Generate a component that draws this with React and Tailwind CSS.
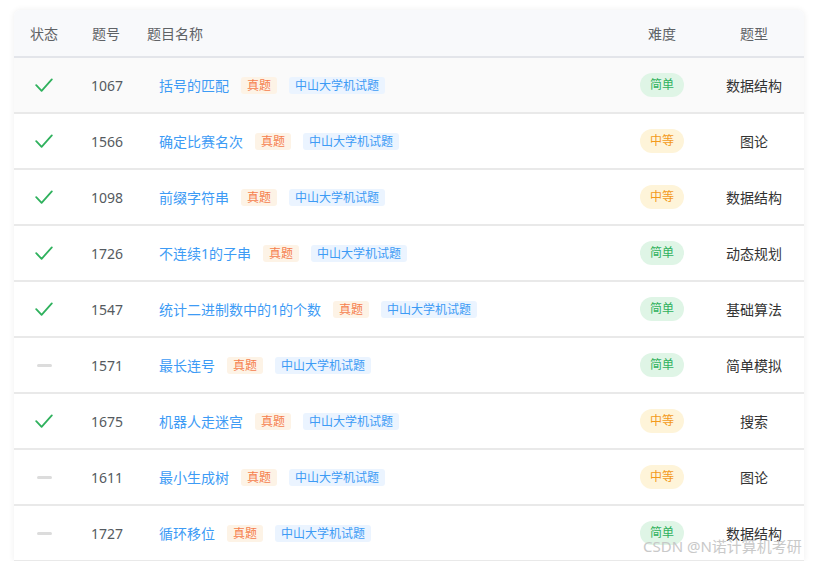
import React from "react";

const rows = [
  { done: true, id: "1067", title: "括号的匹配", level: "简单", type: "数据结构", hover: true },
  { done: true, id: "1566", title: "确定比赛名次", level: "中等", type: "图论" },
  { done: true, id: "1098", title: "前缀字符串", level: "中等", type: "数据结构" },
  { done: true, id: "1726", title: "不连续1的子串", level: "简单", type: "动态规划" },
  { done: true, id: "1547", title: "统计二进制数中的1的个数", level: "简单", type: "基础算法" },
  { done: false, id: "1571", title: "最长连号", level: "简单", type: "简单模拟" },
  { done: true, id: "1675", title: "机器人走迷宫", level: "中等", type: "搜索" },
  { done: false, id: "1611", title: "最小生成树", level: "中等", type: "图论" },
  { done: false, id: "1727", title: "循环移位", level: "简单", type: "数据结构" },
];

function Check() {
  return (
    <svg width="18" height="15" viewBox="0 0 18 15" fill="none">
      <path d="M1.2 7.2 L6.6 12.8 L16.8 1.4" stroke="#2fb15d" strokeWidth="1.8" strokeLinecap="round" strokeLinejoin="round" />
    </svg>
  );
}

export default function App() {
  return (
    <div
      className="w-[813px] h-[561px] bg-white pt-[10px] pl-[14px] relative overflow-hidden"
      style={{ fontFamily: '"Noto Sans", "Noto Sans CJK SC", sans-serif' }}
    >
      <div className="w-[790px] h-[551px] rounded-t-md bg-white shadow-[0_0_6px_rgba(0,0,0,0.07)] overflow-hidden">
        <div className="flex h-[48px] items-center bg-[#f8f9fb] border-b-2 border-[#e3e5ea] text-[14px] text-[#5f6266]">
          <div className="w-[60px] text-center">状态</div>
          <div className="w-[61px] pl-[18px]">题号</div>
          <div className="w-[481px] pl-[12px]">题目名称</div>
          <div className="w-[92px] text-center">难度</div>
          <div className="w-[92px] text-center">题型</div>
        </div>
        {rows.map((r) => (
          <div
            key={r.id}
            className={`flex h-[56px] items-center border-b-2 border-[#e9e9e9] ${r.hover ? "bg-[#fafafa]" : "bg-white"}`}
          >
            <div className="w-[60px] flex justify-center">
              {r.done ? <Check /> : <div className="w-[15px] h-[3px] rounded-sm bg-[#dcdcdc]" />}
            </div>
            <div className="w-[61px] pl-[17px] text-[14px] text-[#555a60]">{r.id}</div>
            <div className="w-[481px] pl-[24px] flex items-center text-[14px]">
              <span className="text-[#3d9bf5]">{r.title}</span>
              <span className="ml-[12px] px-[6px] h-[17px] leading-[17px] rounded-[3px] text-[12px] bg-[#fdf3e6] text-[#f57d4d]">真题</span>
              <span className="ml-[12px] px-[6px] h-[17px] leading-[17px] rounded-[3px] text-[12px] bg-[#ebf4ff] text-[#3d9bf5]">中山大学机试题</span>
            </div>
            <div className="w-[92px] flex justify-center">
              {r.level === "简单" ? (
                <span className="w-[44px] h-[24px] leading-[24px] text-center rounded-full text-[12px] bg-[#dff5e6] text-[#2fb15d]">简单</span>
              ) : (
                <span className="w-[44px] h-[24px] leading-[24px] text-center rounded-full text-[12px] bg-[#fef4d9] text-[#f39a1b]">中等</span>
              )}
            </div>
            <div className="w-[92px] text-center text-[14px] text-[#333333]">{r.type}</div>
          </div>
        ))}
      </div>
      <div className="absolute left-[643px] top-[535px] text-[15px] text-[#c4c4c4] whitespace-nowrap opacity-90">
        CSDN @N诺计算机考研
      </div>
    </div>
  );
}
